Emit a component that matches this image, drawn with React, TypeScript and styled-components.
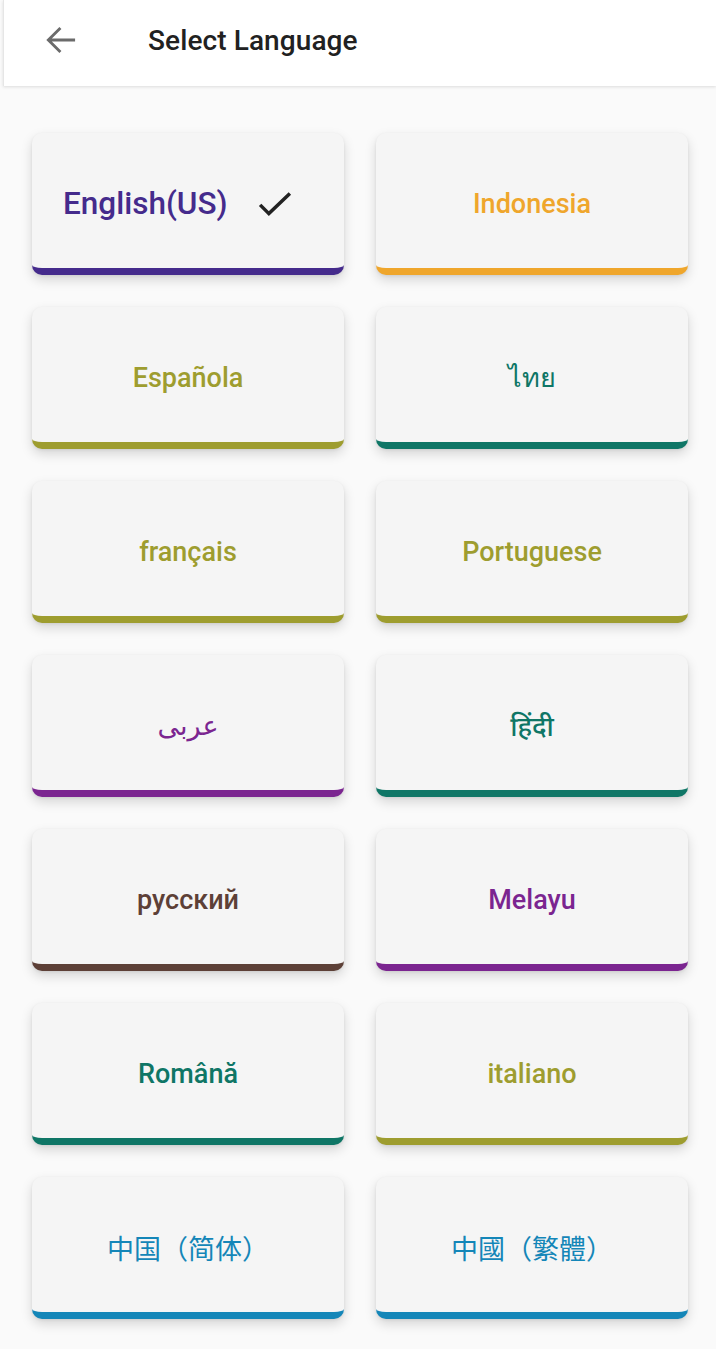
import styled, { createGlobalStyle } from "styled-components";

const GlobalStyle = createGlobalStyle`
  html, body {
    margin: 0;
    padding: 0;
    background: #fafafa;
    font-family: Roboto, "Noto Sans", "Noto Sans CJK SC", sans-serif;
  }
`;

const Page = styled.div`
  width: 716px;
  min-height: 1349px;
  background: #fafafa;
`;

const Header = styled.header`
  display: flex;
  align-items: center;
  height: 86px;
  padding-bottom: 6px;
  box-sizing: border-box;
  background: #ffffff;
  border-left: 1px solid #e6e6e6;
  margin-left: 3px;
  box-shadow: 0 1px 3px rgba(0, 0, 0, 0.12);
`;

const BackButton = styled.button`
  display: flex;
  align-items: center;
  justify-content: center;
  width: 40px;
  height: 40px;
  margin-left: 37px;
  padding: 0;
  border: none;
  background: transparent;
  color: #6b6b6b;
`;

const Title = styled.h1`
  margin: 0 0 0 67px;
  font-size: 28px;
  font-weight: 500;
  color: #212121;
  letter-spacing: 0.1px;
`;

const Grid = styled.div`
  display: grid;
  grid-template-columns: 312px 312px;
  column-gap: 32px;
  row-gap: 32px;
  padding: 47px 28px 40px 32px;
`;

const Card = styled.button<{ $accent: string; $selected?: boolean }>`
  display: flex;
  align-items: center;
  justify-content: ${(p) => (p.$selected ? "flex-start" : "center")};
  gap: 26px;
  height: 142px;
  padding: 6px 0 0 ${(p) => (p.$selected ? "31px" : "0")};
  border: none;
  border-radius: 10px;
  background: #f5f5f5;
  box-shadow: 0 5px 12px rgba(0, 0, 0, 0.15), 0 1px 3px rgba(0, 0, 0, 0.07);
  border-bottom: 7px solid ${(p) => p.$accent};
  box-sizing: border-box;
  cursor: pointer;
  font-family: inherit;
`;

const Label = styled.span<{ $color: string; $big?: boolean; $cjk?: boolean }>`
  font-size: ${(p) => (p.$big ? "31.5px" : "27px")};
  font-weight: ${(p) => (p.$cjk ? 400 : 500)};
  color: ${(p) => p.$color};
  font-family: ${(p) =>
    p.$cjk
      ? `"Noto Sans CJK SC", "Noto Sans CJK TC", sans-serif`
      : `Roboto, "Noto Sans", "DejaVu Sans", sans-serif`};
`;

type Lang = { name: string; color: string; cjk?: boolean };

const languages: Lang[] = [
  { name: "English(US)", color: "#452b8c" },
  { name: "Indonesia", color: "#efa62c" },
  { name: "Española", color: "#9e9d2f" },
  { name: "ไทย", color: "#0f7666" },
  { name: "français", color: "#9e9d2f" },
  { name: "Portuguese", color: "#9e9d2f" },
  { name: "عربى", color: "#7b2590" },
  { name: "हिंदी", color: "#0f7666" },
  { name: "русский", color: "#5d4037" },
  { name: "Melayu", color: "#7b2590" },
  { name: "Română", color: "#0f7666" },
  { name: "italiano", color: "#9e9d2f" },
  { name: "中国（简体）", color: "#1486b8", cjk: true },
  { name: "中國（繁體）", color: "#1486b8", cjk: true },
];

function App() {
  const selected = "English(US)";

  return (
    <Page>
      <GlobalStyle />
      <Header>
        <BackButton aria-label="back">
          <svg width="38" height="38" viewBox="0 0 24 24" fill="none">
            <path
              d="M20 12H4.5M11 5l-7 7 7 7"
              stroke="currentColor"
              strokeWidth="1.8"
              strokeLinecap="square"
            />
          </svg>
        </BackButton>
        <Title>Select Language</Title>
      </Header>
      <Grid>
        {languages.map((lang) => {
          const isSel = lang.name === selected;
          return (
            <Card key={lang.name} $accent={lang.color} $selected={isSel}>
              <Label $color={lang.color} $big={isSel} $cjk={lang.cjk}>
                {lang.name}
              </Label>
              {isSel && (
                <svg width="42" height="42" viewBox="0 0 24 24" fill="none">
                  <path
                    d="M3.5 12.5l5 5L20.5 6"
                    stroke="#222"
                    strokeWidth="2"
                  />
                </svg>
              )}
            </Card>
          );
        })}
      </Grid>
    </Page>
  );
}

export default App;
